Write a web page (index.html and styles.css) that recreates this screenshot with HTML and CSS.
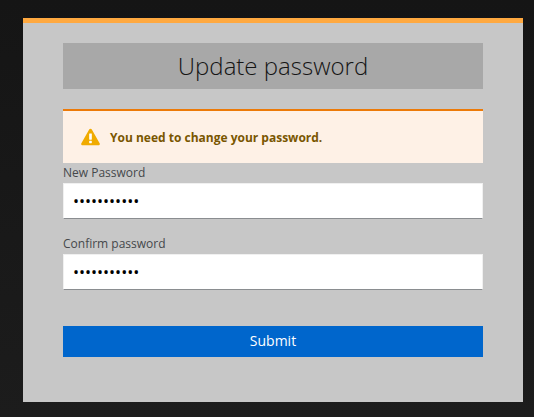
FILE: index.html
```html
<!DOCTYPE html>
<html lang="en">
<head>
<meta charset="utf-8">
<title>Update password</title>
<link rel="stylesheet" href="styles.css">
</head>
<body>
<main class="card">
  <h1 class="title">Update password</h1>
  <div class="alert">
    <svg class="alert-icon" viewBox="0 0 20 18" width="19" height="18" aria-hidden="true">
      <path fill="#f0ab00" d="M10 0.4c.6 0 1.1.3 1.4.8l8.2 14.4c.6 1-.1 2.2-1.4 2.2H1.8c-1.3 0-2-1.2-1.4-2.2L8.6 1.2c.3-.5.8-.8 1.4-.8z"/>
      <rect x="8.6" y="5.2" width="2.8" height="6.6" rx=".5" fill="#fff"/>
      <rect x="8.6" y="13" width="2.8" height="2.6" rx=".5" fill="#fff"/>
    </svg>
    <span class="alert-text">You need to change your password.</span>
  </div>
  <form class="form">
    <div class="field">
      <label class="label" for="new">New Password</label>
      <input class="input" id="new" type="password" value="aaaaaaaaaaa">
    </div>
    <div class="field">
      <label class="label" for="confirm">Confirm password</label>
      <input class="input" id="confirm" type="password" value="aaaaaaaaaaa">
    </div>
    <button class="submit" type="button">Submit</button>
  </form>
</main>
</body>
</html>
```
FILE: styles.css
```css
* { box-sizing: border-box; }
html, body { height: 100%; }
body {
  margin: 0;
  padding: 18px 11px 15px 23px;
  background: linear-gradient(180deg, #151515 0%, #1c1c1c 100%);
  font-family: "Open Sans", "Liberation Sans", sans-serif;
  overflow: hidden;
}
.card {
  width: 500px;
  height: 384px;
  padding: 20px 40px 0;
  background: #c7c7c7;
  border-top: 5px solid #ffa940;
}
.title {
  margin: 0;
  height: 46px;
  background: #a8a8a8;
  color: #151515;
  font-size: 24px;
  font-weight: 300;
  line-height: 46px;
  text-align: center;
}
.alert {
  display: flex;
  align-items: center;
  gap: 10px;
  height: 54px;
  margin-top: 20px;
  padding: 0 18px;
  background: #fef1e6;
  border-top: 2px solid #ec7a08;
}
.alert-icon { flex: none; margin-top: -1px; }
.alert-text {
  color: #795600;
  font-size: 12px;
  font-weight: 700;
}
.form { display: flex; flex-direction: column; }
.field { display: flex; flex-direction: column; margin-bottom: 15px; }
.label {
  height: 20px;
  color: #45484b;
  font-size: 12px;
  line-height: 20px;
}
.input {
  width: 100%;
  height: 36px;
  padding: 0 9px;
  background: #fff;
  border: 1px solid #f0f0f0;
  border-bottom-color: #8a8d90;
  border-radius: 0;
  color: #000;
  font-family: "Open Sans", sans-serif;
  font-size: 16px;
  outline: none;
}
.submit {
  height: 31px;
  margin-top: 21px;
  padding: 0 0 2px;
  background: #06c;
  border: 0;
  color: #fff;
  font-family: "Open Sans", sans-serif;
  font-size: 14px;
}
```
